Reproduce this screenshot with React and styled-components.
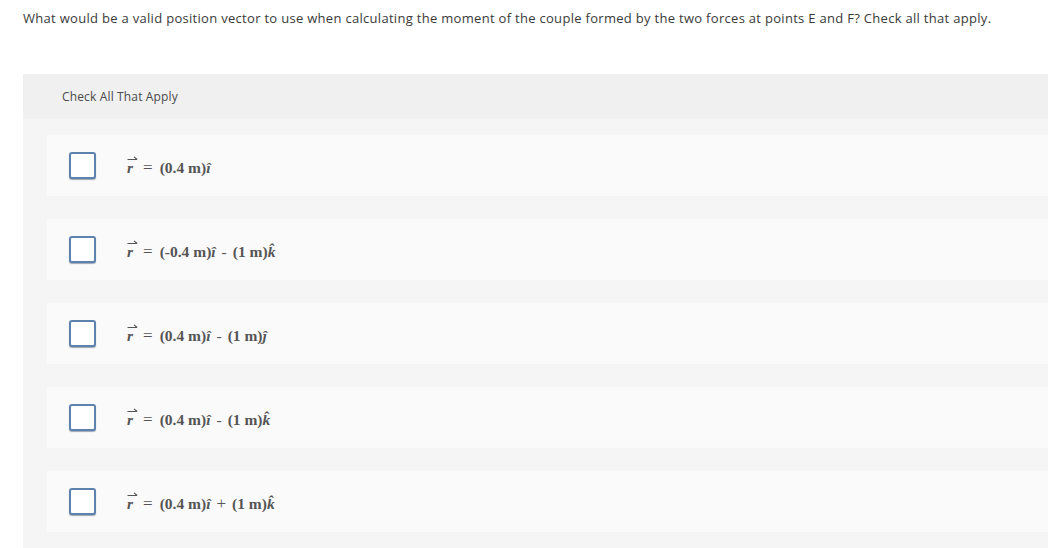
import React from "react";
import styled, { createGlobalStyle } from "styled-components";

const GlobalStyle = createGlobalStyle`
    html, body {
        margin: 0;
        padding: 0;
        background: #ffffff;
        overflow: hidden;
    }
`;

const Page = styled.div`
    width: 1048px;
    height: 548px;
    overflow: hidden;
    padding-left: 23px;
    box-sizing: border-box;
`;

const Question = styled.p`
    margin: 0;
    padding-top: 10px;
    height: 74px;
    box-sizing: border-box;
    font-family: "Open Sans", "Liberation Sans", sans-serif;
    font-size: 13px;
    line-height: 16px;
    color: #3a3a3a;
    white-space: nowrap;
    letter-spacing: 0.3px;
`;

const Panel = styled.div`
    width: 1080px;
    background: #f5f5f5;
    padding-bottom: 16px;
`;

const Header = styled.div`
    height: 45px;
    display: flex;
    align-items: center;
    padding-left: 39px;
    background: #f0f0f0;
    font-family: "Open Sans", "Liberation Sans", sans-serif;
    font-size: 12px;
    letter-spacing: 0.15px;
    color: #4a4a4a;
`;

const Choices = styled.div`
    display: flex;
    flex-direction: column;
    gap: 23px;
    padding: 16px 0 0 24px;
`;

const Choice = styled.label`
    height: 61px;
    display: flex;
    align-items: center;
    background: #fafafa;
    padding-left: 22px;
`;

const Box = styled.span`
    width: 27px;
    height: 27px;
    box-sizing: border-box;
    border: 2px solid #5d82ad;
    border-radius: 3px;
    background: #ffffff;
    box-shadow: 0 1px 1px rgba(40, 60, 90, 0.45);
    flex-shrink: 0;
`;

const Math = styled.span`
    margin-left: 31px;
    margin-top: 4px;
    font-family: "Liberation Serif", "DejaVu Serif", serif;
    font-weight: bold;
    font-size: 15.5px;
    color: #555555;
    white-space: pre;
    display: flex;
    align-items: baseline;
`;

const Vec = styled.span`
    position: relative;
    font-style: italic;
    display: inline-block;
    padding-right: 3px;
`;

const ArrowMark = styled.svg`
    position: absolute;
    left: 0;
    top: -3px;
    width: 11px;
    height: 6px;
`;

const Unit = styled.i`
    font-style: italic;
`;

const Op = styled.span`
    font-weight: ${(p) => (p.$bold ? "bold" : "normal")};
    font-size: ${(p) => (p.$big ? "17px" : "inherit")};
    margin: 0 ${(p) => p.$space || 5}px;
`;

const R = () => (
    <Vec>
        r
        <ArrowMark viewBox="0 0 11 6">
            <path
                d="M0.5 3.5 H10 M7 0.8 L10.2 3.5"
                stroke="#555"
                strokeWidth="1.1"
                fill="none"
            />
        </ArrowMark>
    </Vec>
);

const choices = [
    [["(0.4 m)", "î"]],
    [["(-0.4 m)", "î"], "-", ["(1 m)", "k̂"]],
    [["(0.4 m)", "î"], "-", ["(1 m)", "ĵ"]],
    [["(0.4 m)", "î"], "-", ["(1 m)", "k̂"]],
    [["(0.4 m)", "î"], "+", ["(1 m)", "k̂"]],
];

const App = () => (
    <Page>
        <GlobalStyle />
        <Question>
            What would be a valid position vector to use when calculating the
            moment of the couple formed by the two forces at points E and F?
            Check all that apply.
        </Question>
        <Panel>
            <Header>Check All That Apply</Header>
            <Choices>
                {choices.map((terms, i) => (
                    <Choice key={i}>
                        <Box />
                        <Math>
                            <R />
                            <Op $space={7} $big>
                                =
                            </Op>
                            {terms.map((t, j) =>
                                typeof t === "string" ? (
                                    <Op key={j} $space={6} $big={t === "+"}>
                                        {t}
                                    </Op>
                                ) : (
                                    <span key={j}>
                                        {t[0]}
                                        <Unit>{t[1]}</Unit>
                                    </span>
                                )
                            )}
                        </Math>
                    </Choice>
                ))}
            </Choices>
        </Panel>
    </Page>
);

export default App;
